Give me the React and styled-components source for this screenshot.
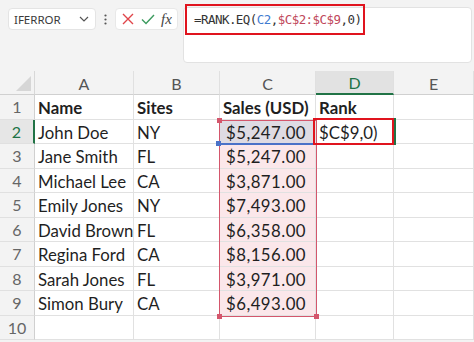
import React from "react";
import styled, { createGlobalStyle, css } from "styled-components";

const Global = createGlobalStyle`
  html, body { margin: 0; padding: 0; background: #f3f3f3; }
  body { width: 474px; height: 342px; overflow: hidden; }
`;

const Page = styled.div`
  width: 474px;
  height: 342px;
  background: #f3f3f3;
  overflow: hidden;
  display: flex;
  flex-direction: column;
`;

const Toolbar = styled.div`
  height: 71px;
  box-sizing: border-box;
  display: flex;
  align-items: flex-start;
  padding: 7px 2px 0 8px;
  font-family: "Noto Sans", "Open Sans", sans-serif;
`;

const NameBox = styled.div`
  width: 88px;
  height: 22px;
  margin-top: 1px;
  box-sizing: border-box;
  background: #fff;
  border: 1px solid #e4e4e4;
  border-radius: 4px;
  display: flex;
  align-items: center;
  justify-content: space-between;
  padding: 0 6px 0 5px;
  font-size: 11.5px;
  color: #3a3a3a;
`;

const Dots = styled.div`
  width: 19px;
  display: flex;
  justify-content: center;
  padding-top: 7px;
`;

const FxBox = styled.div`
  width: 63px;
  height: 22px;
  margin-top: 1px;
  box-sizing: border-box;
  background: #fff;
  border: 1px solid #e8e8e8;
  border-radius: 4px;
  display: flex;
  align-items: center;
  justify-content: space-around;
  padding: 0 2px 0 3px;
`;

const Fx = styled.span`
  font-family: "Liberation Serif", serif;
  font-style: italic;
  font-size: 15px;
  color: #444;
  line-height: 1;
`;

const FormulaBox = styled.div`
  position: relative;
  flex: 1;
  margin-left: 5px;
  height: 56px;
  box-sizing: border-box;
  background: #fff;
  border: 1px solid #e2e2e2;
  border-radius: 4px;
`;

const FormulaText = styled.div`
  position: absolute;
  left: 1px;
  top: -4px;
  width: 180px;
  height: 31px;
  box-sizing: border-box;
  border: 2px solid #e0141e;
  display: flex;
  align-items: center;
  padding-left: 7px;
  font-family: "DejaVu Sans Mono", monospace;
  font-size: 12.5px;
  letter-spacing: -0.55px;
  color: #333;
`;

const Ref = styled.span`
  color: ${(p) => p.$color};
`;

const gridTemplate = css`
  display: grid;
  grid-template-columns: 35px 99px 86px 96px 78px 1fr;
  grid-template-rows: 24px repeat(10, 24.5px);
`;

const SheetWrap = styled.div`
  position: relative;
`;

const Sheet = styled.div`
  ${gridTemplate}
  font-family: Lato, "Liberation Sans", sans-serif;
`;

const OverlayLayer = styled.div`
  ${gridTemplate}
  position: absolute;
  inset: 0;
  pointer-events: none;
`;

const Corner = styled.div`
  background: #f3f3f3;
  border-right: 1px solid #d8d8d8;
  border-bottom: 1px solid #d0d0d0;
  box-sizing: border-box;
  display: flex;
  align-items: flex-end;
  justify-content: flex-end;
  padding: 0 3px 3px 0;
`;

const ColHead = styled.div`
  background: ${(p) => (p.$active ? "#e2e2e2" : "#f3f3f3")};
  border-right: 1px solid #e0e0e0;
  border-bottom: ${(p) => (p.$active ? "2px solid #217346" : "1px solid #d0d0d0")};
  box-sizing: border-box;
  display: flex;
  align-items: center;
  justify-content: center;
  font-size: 16px;
  color: ${(p) => (p.$active ? "#217346" : "#555")};
  padding-top: 1px;
`;

const RowHead = styled.div`
  background: ${(p) => (p.$active ? "#e6e6e6" : "#f3f3f3")};
  border-right: ${(p) => (p.$active ? "2px solid #217346" : "1px solid #d0d0d0")};
  border-bottom: 1px solid #e0e0e0;
  box-sizing: border-box;
  display: flex;
  align-items: center;
  justify-content: center;
  font-size: 16px;
  color: ${(p) => (p.$active ? "#217346" : "#666")};
`;

const Cell = styled.div`
  background: ${(p) => p.$bg || "#fff"};
  border-right: 1px solid #e1e1e1;
  border-bottom: 1px solid #e1e1e1;
  box-sizing: border-box;
  display: flex;
  align-items: center;
  justify-content: ${(p) => (p.$right ? "flex-end" : "flex-start")};
  padding: 2px ${(p) => (p.$right ? "9px" : "0")} 0 3px;
  font-size: 16.8px;
  letter-spacing: ${(p) => (p.$right ? "0.45px" : "0")};
  color: #1f1f1f;
  white-space: nowrap;
  overflow: visible;
  ${(p) =>
    p.$bold &&
    css`
      font-weight: 700;
    `}
`;

const Overlay = styled.div`
  grid-column: ${(p) => p.$col};
  grid-row: ${(p) => p.$row};
  position: relative;
  box-sizing: border-box;
`;

const RangeBox = styled(Overlay)`
  margin: 0 -1px -1px -1px;
  border: 1.5px solid #d4566c;
`;

const RefBox = styled(Overlay)`
  margin: 0 -1px -1px -1px;
  border-bottom: 2px solid #4a72c8;
`;

const Annot = styled(Overlay)`
  margin: -2px 0 -1px -3px;
  border: 2px solid #e0141e;
  box-shadow: 2px 0 0 0 #217346;
`;

const Handle = styled.span`
  position: absolute;
  width: 5px;
  height: 5px;
  background: ${(p) => p.$color};
  ${(p) => (p.$top ? "top: -3px;" : "bottom: -3px;")}
  ${(p) => (p.$left ? "left: -3px;" : "right: -3px;")}
`;

const cols = ["A", "B", "C", "D", "E"];

const data = [
  ["John Doe", "NY", "$5,247.00"],
  ["Jane Smith", "FL", "$5,247.00"],
  ["Michael Lee", "CA", "$3,871.00"],
  ["Emily Jones", "NY", "$7,493.00"],
  ["David Brown", "FL", "$6,358.00"],
  ["Regina Ford", "CA", "$8,156.00"],
  ["Sarah Jones", "FL", "$3,971.00"],
  ["Simon Bury", "CA", "$6,493.00"],
];

export default function App() {
  const rows = [];
  rows.push(
    <React.Fragment key="r1">
      <RowHead>1</RowHead>
      <Cell $bold>Name</Cell>
      <Cell $bold>Sites</Cell>
      <Cell $bold>Sales (USD)</Cell>
      <Cell $bold>Rank</Cell>
      <Cell />
    </React.Fragment>
  );
  data.forEach((d, i) => {
    const n = i + 2;
    rows.push(
      <React.Fragment key={n}>
        <RowHead $active={n === 2}>{n}</RowHead>
        <Cell>{d[0]}</Cell>
        <Cell>{d[1]}</Cell>
        <Cell $right $bg={n === 2 ? "#dedbe3" : "#fbe7ea"}>{d[2]}</Cell>
        <Cell>{n === 2 ? "$C$9,0)" : ""}</Cell>
        <Cell />
      </React.Fragment>
    );
  });
  rows.push(
    <React.Fragment key="r10">
      <RowHead>10</RowHead>
      <Cell />
      <Cell />
      <Cell />
      <Cell />
      <Cell />
    </React.Fragment>
  );

  return (
    <Page>
      <Global />
      <Toolbar>
        <NameBox>
          <span>IFERROR</span>
          <svg width="10" height="6" viewBox="0 0 10 6">
            <path d="M1 1l4 4 4-4" fill="none" stroke="#555" strokeWidth="1.2" />
          </svg>
        </NameBox>
        <Dots>
          <svg width="3" height="11" viewBox="0 0 3 11">
            <circle cx="1.5" cy="1.5" r="1.1" fill="#555" />
            <circle cx="1.5" cy="5.5" r="1.1" fill="#555" />
            <circle cx="1.5" cy="9.5" r="1.1" fill="#555" />
          </svg>
        </Dots>
        <FxBox>
          <svg width="12" height="12" viewBox="0 0 12 12">
            <path d="M1 1l10 10M11 1L1 11" stroke="#e0454a" strokeWidth="1.4" />
          </svg>
          <svg width="14" height="11" viewBox="0 0 14 11">
            <path d="M1 5.5l4 4L13 1" fill="none" stroke="#3b9a5e" strokeWidth="1.4" />
          </svg>
          <Fx>fx</Fx>
        </FxBox>
        <FormulaBox>
          <FormulaText>
            =RANK.EQ(<Ref $color="#3f7bd0">C2</Ref>,<Ref $color="#c0475a">$C$2:$C$9</Ref>,0)
          </FormulaText>
        </FormulaBox>
      </Toolbar>
      <SheetWrap>
        <Sheet>
          <Corner>
            <svg width="15" height="15" viewBox="0 0 15 15">
              <path d="M15 0V15H0Z" fill="#d6d6d6" />
            </svg>
          </Corner>
          {cols.map((c) => (
            <ColHead key={c} $active={c === "D"}>
              {c}
            </ColHead>
          ))}
          {rows}
        </Sheet>
        <OverlayLayer>
          <RangeBox $col="4" $row="3 / 11">
            <Handle $color="#d4566c" $top $left />
            <Handle $color="#d4566c" $left />
            <Handle $color="#d4566c" />
          </RangeBox>
          <RefBox $col="4" $row="3">
            <Handle $color="#4a72c8" $left />
          </RefBox>
          <Annot $col="5" $row="3" />
        </OverlayLayer>
      </SheetWrap>
    </Page>
  );
}
